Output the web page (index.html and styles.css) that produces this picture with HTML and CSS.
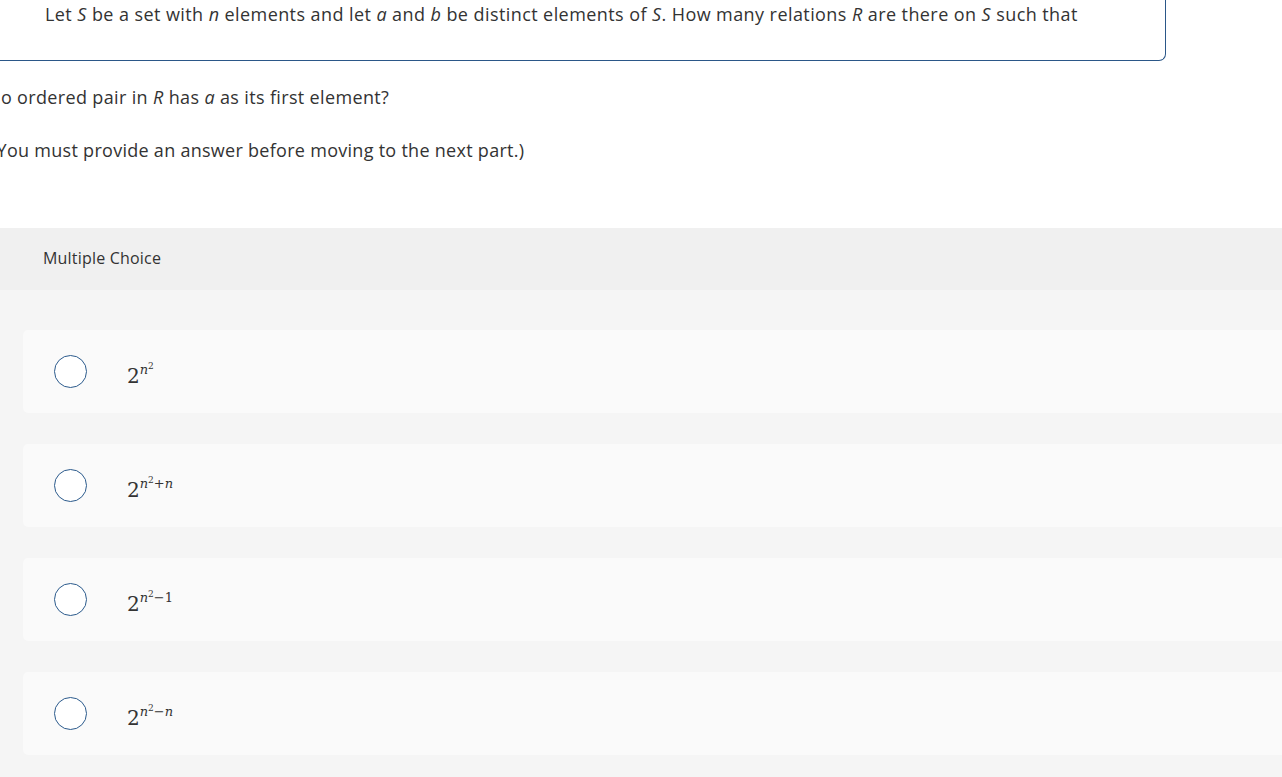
FILE: index.html
```html
<!DOCTYPE html>
<html>
<head>
<meta charset="utf-8">
<link rel="stylesheet" href="styles.css">
</head>
<body>
<div class="page">
  <div class="question-box">
    <p class="q-line">Let <i>S</i> be a set with <i>n</i> elements and let <i>a</i> and <i>b</i> be distinct elements of <i>S</i>. How many relations <i>R</i> are there on <i>S</i> such that</p>
  </div>
  <p class="part">No ordered pair in <i>R</i> has <i>a</i> as its first element?</p>
  <p class="note">(You must provide an answer before moving to the next part.)</p>
  <section class="mc">
    <div class="mc-head">Multiple Choice</div>
    <div class="mc-body">
      <div class="choice"><span class="radio"></span><span class="math">2<sup><i>n</i><sup>2</sup></sup></span></div>
      <div class="choice"><span class="radio"></span><span class="math">2<sup><i>n</i><sup>2</sup>+<i>n</i></sup></span></div>
      <div class="choice"><span class="radio"></span><span class="math">2<sup><i>n</i><sup>2</sup>−1</sup></span></div>
      <div class="choice"><span class="radio"></span><span class="math">2<sup><i>n</i><sup>2</sup>−<i>n</i></sup></span></div>
    </div>
  </section>
</div>
</body>
</html>
```
FILE: styles.css
```css
html, body {
  margin: 0;
  padding: 0;
  background: #fff;
  overflow: hidden;
}
body {
  font-family: "Open Sans", Lato, sans-serif;
  color: #333;
  width: 1282px;
  height: 777px;
}
.page {
  width: 1282px;
}
.question-box {
  margin-left: -40px;
  width: 1206px;
  height: 61px;
  box-sizing: border-box;
  border: 1px solid #2b5788;
  border-top: none;
  border-radius: 0 0 7px 7px;
  padding-left: 84px;
  overflow: hidden;
}
.q-line,
.part,
.note {
  font-size: 18px;
  line-height: 26px;
  letter-spacing: 0.35px;
  white-space: nowrap;
}
.q-line {
  margin: 0;
  padding-top: 1px;
  letter-spacing: 0.42px;
}
.part {
  margin: 23px 0 0 -13px;
}
.note {
  margin: 27px 0 0 -9px;
  letter-spacing: 0.28px;
}
.mc {
  margin-top: 65px;
}
.mc-head {
  background: #f0f0f0;
  height: 62px;
  display: flex;
  align-items: center;
  padding-left: 43px;
  padding-bottom: 2px;
  box-sizing: border-box;
  font-size: 16px;
  letter-spacing: 0.2px;
}
.mc-body {
  background: #f5f5f5;
  padding: 40px 0 30px 23px;
  display: flex;
  flex-direction: column;
  gap: 31px;
}
.choice {
  background: #fafafa;
  border-radius: 5px 0 0 5px;
  height: 83px;
  display: flex;
  align-items: center;
}
.radio {
  width: 31px;
  height: 31px;
  border: 1.5px solid #2b5a8c;
  border-radius: 50%;
  background: #fff;
  margin-left: 31px;
  flex: none;
}
.math {
  margin-left: 40px;
  margin-top: 9px;
  font-family: "DejaVu Serif", serif;
  font-size: 20px;
  color: #333;
  line-height: 1;
}
.math sup {
  font-size: 13px;
  vertical-align: 9px;
  line-height: 0;
}
.math sup sup {
  font-size: 9px;
  vertical-align: 5px;
}
.math i {
  font-style: italic;
}
```
